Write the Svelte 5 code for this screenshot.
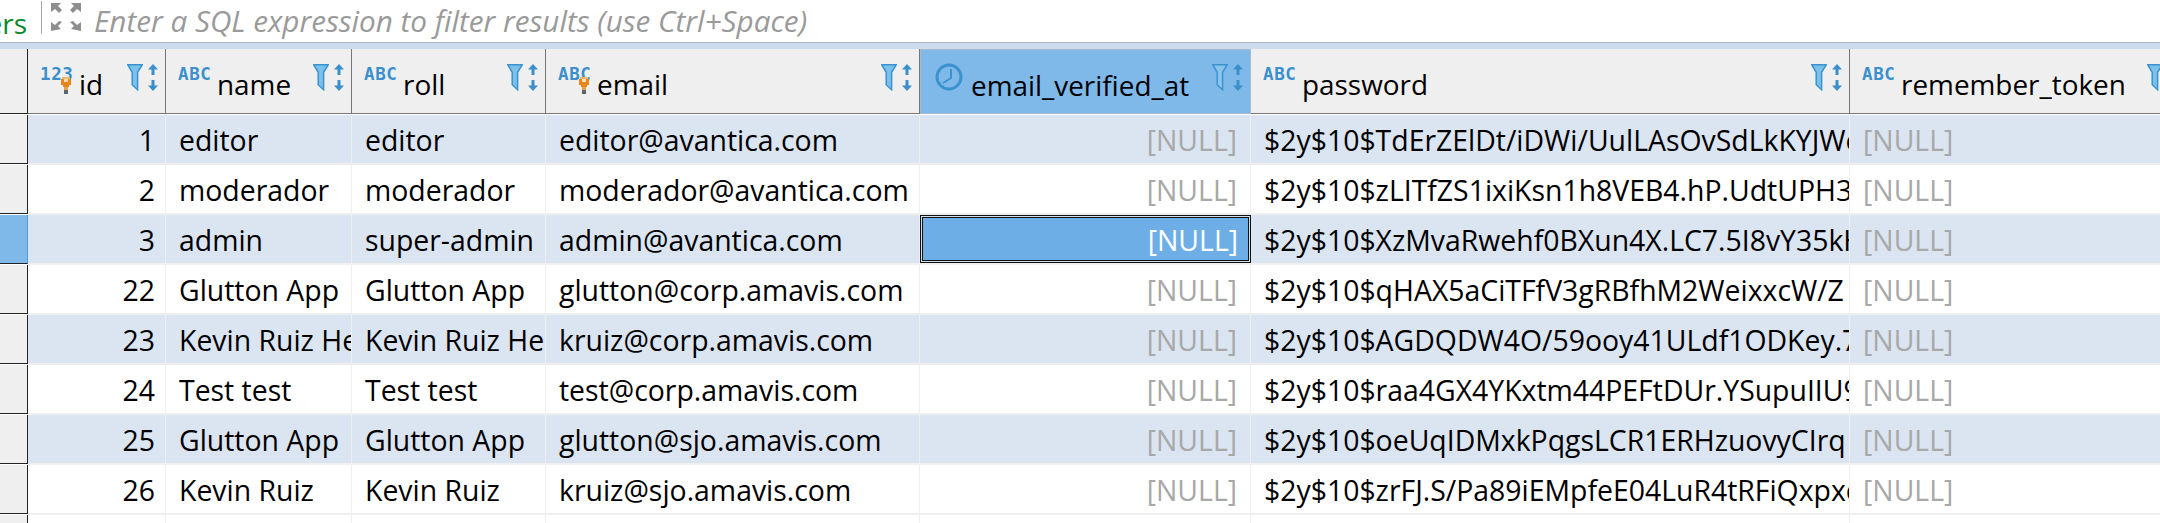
<script lang="ts">
	type Column = { name: string; type: 'num' | 'abc' | 'time'; key?: boolean; width: number };

	const columns: Column[] = [
		{ name: 'id', type: 'num', key: true, width: 138 },
		{ name: 'name', type: 'abc', width: 186 },
		{ name: 'roll', type: 'abc', width: 194 },
		{ name: 'email', type: 'abc', key: true, width: 374 },
		{ name: 'email_verified_at', type: 'time', width: 331 },
		{ name: 'password', type: 'abc', width: 599 },
		{ name: 'remember_token', type: 'abc', width: 336 }
	];

	const rows = [
		['1', 'editor', 'editor', 'editor@avantica.com', '$2y$10$TdErZElDt/iDWi/UulLAsOvSdLkKYJWe'],
		['2', 'moderador', 'moderador', 'moderador@avantica.com', '$2y$10$zLITfZS1ixiKsn1h8VEB4.hP.UdtUPH3c'],
		['3', 'admin', 'super-admin', 'admin@avantica.com', '$2y$10$XzMvaRwehf0BXun4X.LC7.5I8vY35kH'],
		['22', 'Glutton App', 'Glutton App', 'glutton@corp.amavis.com', '$2y$10$qHAX5aCiTFfV3gRBfhM2WeixxcW/Z'],
		['23', 'Kevin Ruiz He', 'Kevin Ruiz He', 'kruiz@corp.amavis.com', '$2y$10$AGDQDW4O/59ooy41ULdf1ODKey.7'],
		['24', 'Test test', 'Test test', 'test@corp.amavis.com', '$2y$10$raa4GX4YKxtm44PEFtDUr.YSupuIIU9'],
		['25', 'Glutton App', 'Glutton App', 'glutton@sjo.amavis.com', '$2y$10$oeUqIDMxkPqgsLCR1ERHzuovyCIrq'],
		['26', 'Kevin Ruiz', 'Kevin Ruiz', 'kruiz@sjo.amavis.com', '$2y$10$zrFJ.S/Pa89iEMpfeE04LuR4tRFiQxpxc']
	];

	const selectedRow = 2;
	const gridCols = `28px ${columns.map((c) => c.width + 'px').join(' ')}`;
</script>

<div class="screen">
	<div class="filterbar">
		<span class="tab"><span>ers</span></span>
		<span class="sep"></span>
		<svg class="expand" width="30" height="31" viewBox="0 0 30 31">
			<path d="M0 1h10l-3 3 4 4-3 3-4-4-4 3zM30 1H20l3 3-4 4 3 3 4-4 4 3zM11 20l-4 4 3 3-10 2V20l4 3 4-4zM19 20l4 4-3 3 10 2V20l-4 3-4-4z" fill="#8e8e8e" />
		</svg>
		<span class="placeholder">Enter a SQL expression to filter results (use Ctrl+Space)</span>
	</div>

	<div class="band"></div>

	<div class="grid" style="grid-template-columns: {gridCols}">
		<div class="corner"></div>
		{#each columns as col}
			<div class="head" class:active={col.type === 'time'}>
				<span class="type-icon">
					{#if col.type === 'time'}
						<svg class="clock" width="28" height="28" viewBox="0 0 28 28" fill="none" stroke="#3a93cf" stroke-width="3">
							<circle cx="14" cy="14" r="12" />
							<path d="M16 6v9l-8 5" stroke-width="2" />
						</svg>
					{:else}
						<span class="type-text">{col.type === 'num' ? '123' : 'ABC'}</span>
					{/if}
					{#if col.key}
						<svg class="key" width="10" height="17" viewBox="0 0 10 17">
							<rect x="1" y="0" width="8" height="2" fill="#f2b56e" />
							<rect x="0" y="2" width="10" height="6" fill="#e8861c" />
							<rect x="3" y="2" width="4" height="3" fill="#f9dfb8" />
							<rect x="2" y="8" width="6" height="2" fill="#e8861c" />
							<rect x="3" y="10" width="4" height="3" fill="#e8a04c" />
							<rect x="3" y="13" width="4" height="4" fill="#5b6570" />
						</svg>
					{/if}
				</span>
				<span class="head-name">{col.name}</span>
				<span class="head-tools">
					<svg width="16" height="27" viewBox="0 0 16 27">
						<path d="M0.8 0.8h14.400l-4.600 7.500v17.400l-5.400-5V8.300z" fill={col.type === 'time' ? '#8cc4ee' : '#7cc0ec'} stroke="#3a93cf" stroke-width="1.500" />
					</svg>
					<svg width="10" height="27" viewBox="0 0 10 27">
						<path d="M5 0l5 5.500H6.500V11h-3V5.500H0zM5 27l5-5.500H6.500V16h-3v5.500H0z" fill="#3a8fcc" />
					</svg>
				</span>
			</div>
		{/each}

		{#each rows as row, r}
			<div class="row-head" class:current={r === selectedRow}></div>
			{#each columns as col, c}
				<div
					class="cell"
					class:odd={r % 2 === 0}
					class:num={col.type === 'num'}
					class:selected={r === selectedRow && c === 4}
					class:pw={c === 5}
				>
					{#if c === 4}
						<span class="null right">[NULL]</span>
					{:else if c === 6}
						<span class="null">[NULL]</span>
					{:else}
						{row[c < 4 ? c : 4]}
					{/if}
				</div>
			{/each}
		{/each}

		<div class="row-head tail"></div>
		{#each columns as col}
			<div class="cell tail-cell"></div>
		{/each}
	</div>
</div>

<style>
	:global(body) {
		background: #fff;
		overflow: hidden;
	}
	.screen {
		width: 2160px;
		height: 523px;
		overflow: hidden;
		font-family: 'Open Sans', 'Noto Sans', sans-serif;
		color: #000;
	}
	.filterbar {
		height: 43px;
		display: flex;
		align-items: center;
		box-sizing: border-box;
		border-bottom: 1px solid #b0b4ba;
		overflow: hidden;
	}
	.tab {
		color: #0a8a2a;
		font-size: 28px;
		width: 41px;
		flex: none;
		display: flex;
		justify-content: flex-end;
		padding-right: 14px;
		box-sizing: border-box;
		white-space: nowrap;
		margin-top: 4px;
	}
	.tab span {
		flex: none;
	}
	.sep {
		width: 1px;
		height: 33px;
		background: #a8a8a8;
		flex: none;
		margin-bottom: 7px;
	}
	.expand {
		flex: none;
		margin: 0 13px 7px 9px;
	}
	.placeholder {
		color: #9a9a9a;
		font-style: italic;
		font-size: 29.7px;
		white-space: nowrap;
		margin-bottom: 2px;
	}
	.band {
		height: 6px;
		background: #ccdcee;
	}
	.grid {
		display: grid;
		grid-auto-rows: 50px;
		grid-template-rows: 66px;
	}
	.corner {
		background: #efefef;
		border-right: 1px solid #222;
		border-bottom: 1px solid #222;
		margin-bottom: 1px;
		box-sizing: border-box;
	}
	.head {
		background: #efefef;
		border-right: 1px solid #777;
		border-bottom: 1px solid #777;
		margin-bottom: 1px;
		box-sizing: border-box;
		display: flex;
		align-items: flex-start;
		padding: 15px 7px 0 12px;
		min-width: 0;
		font-size: 27.9px;
	}
	.head.active {
		background: #7fb9ea;
		border: 1px solid #a9b9c9;
		padding: 13px 7px 0 14px;
	}
	.head.active .head-tools {
		margin-top: 1px;
	}
	.type-icon {
		position: relative;
		display: block;
		width: 33px;
		flex: none;
		margin-right: 6px;
		line-height: 1;
	}
	.active .type-icon {
		width: 28px;
		margin-right: 8px;
	}
	.clock {
		display: block;
	}
	.type-text {
		color: #3a8fcc;
		font-family: 'DejaVu Sans Mono', monospace;
		font-weight: 700;
		font-size: 17.5px;
		letter-spacing: 0.6px;
		display: block;
		margin-top: 2px;
	}
	.key {
		position: absolute;
		right: 2px;
		top: 13px;
	}
	.head-name {
		flex: 1;
		white-space: nowrap;
		line-height: 40px;
	}
	.active .head-name {
		margin-top: 2px;
	}
	.head-tools {
		flex: none;
		display: flex;
		gap: 5px;
	}
	.row-head {
		background: #efefef;
		border-right: 1px solid #222;
		border-bottom: 1px solid #222;
		margin-bottom: 1px;
		box-sizing: border-box;
	}
	.row-head.current {
		background: #7fb9ea;
		border-right-color: #4b9ade;
	}
	.row-head.tail {
		border-bottom: 0;
	}
	.cell {
		box-sizing: border-box;
		border-right: 1px solid #efefef;
		border-bottom: 2px solid #efefef;
		font-size: 28.4px;
		line-height: 50px;
		padding: 0 13px;
		white-space: nowrap;
		overflow: hidden;
		min-width: 0;
	}
	.cell.odd {
		background: #dbe5f1;
	}
	.cell.num {
		text-align: right;
		padding-right: 10px;
	}
	.cell.pw {
		padding-right: 0;
	}
	.null {
		color: #a8a8a8;
	}
	.null.right {
		display: block;
		text-align: right;
	}
	.cell.selected {
		background: #6eaee6;
		border: 1px solid #111;
		box-shadow:
			inset 0 0 0 1px #cfe0f0,
			inset 0 0 0 2px #111,
			0 2px 0 #efefef;
		height: 48px;
		line-height: 48px;
		padding: 0 12px;
	}
	.cell.selected .null {
		color: #fff;
	}
	.tail-cell {
		border-bottom: 0;
	}
</style>
